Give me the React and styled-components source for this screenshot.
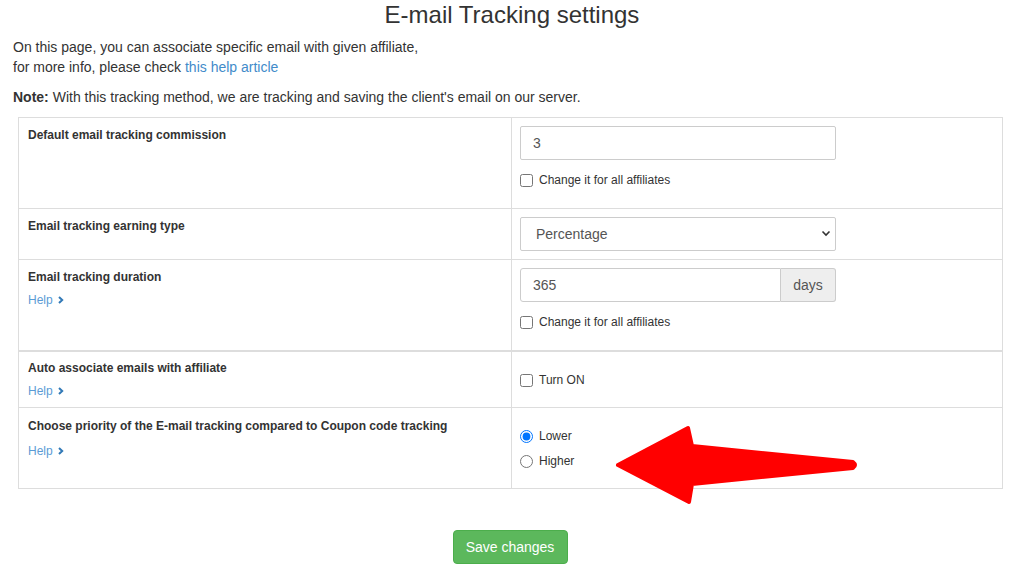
import React from "react";
import styled, { createGlobalStyle } from "styled-components";

const Global = createGlobalStyle`
  html, body { margin: 0; padding: 0; background: #fff; }
  body { font-family: "Liberation Sans", Arial, sans-serif; color: #333; font-size: 14px; line-height: 20px; }
  * { box-sizing: border-box; }
`;

const Page = styled.div`
  position: relative;
  padding: 0 21px 0 13px;
  width: 1024px;
  height: 586px;
  overflow: hidden;
`;

const Title = styled.h1`
  margin: 2px 0 9px;
  text-align: center;
  font-weight: 400;
  font-size: 24px;
  line-height: 26px;
  color: #333;
  padding-left: 8px;
`;

const Para = styled.p`
  margin: 0 0 10px;
`;

const Link = styled.a`
  color: #428bca;
  text-decoration: none;
`;

const Table = styled.table`
  margin: 0 0 0 5px;
  width: 985px;
  border-collapse: collapse;
  border: 1px solid #ddd;
  table-layout: fixed;
`;

const Row = styled.tr`
  border-top: ${(p) => (p.$thick ? "2px" : "1px")} solid #ddd;
`;

const LabelCell = styled.td`
  width: 493px;
  padding: ${(p) => p.$pad || "8px 9px"};
  vertical-align: top;
  border-right: 1px solid #ddd;
`;

const FieldCell = styled.td`
  padding: ${(p) => p.$pad || "8px"};
  vertical-align: middle;
`;

const Label = styled.div`
  font-weight: 700;
  font-size: 12px;
  line-height: 18px;
  margin-bottom: ${(p) => (p.$gap ? p.$gap : "3px")};
`;

const Help = styled.a`
  display: inline-flex;
  align-items: center;
  gap: 5px;
  font-size: 12px;
  line-height: 20px;
  color: #5b9bd5;
  text-decoration: none;
`;

const TextInput = styled.input`
  display: block;
  width: 316px;
  height: 34px;
  padding: 6px 12px;
  font-family: inherit;
  font-size: 14px;
  color: #555;
  border: 1px solid #ccc;
  border-radius: 2px;
  outline: none;
`;

const Group = styled.div`
  display: flex;
  width: 316px;
  height: 34px;
`;

const GroupInput = styled(TextInput)`
  flex: 1;
  width: auto;
  border-radius: 3px 0 0 3px;
`;

const Addon = styled.span`
  display: flex;
  align-items: center;
  justify-content: center;
  width: 55px;
  border: 1px solid #ccc;
  border-left: 0;
  border-radius: 0 3px 3px 0;
  background: #eee;
  color: #555;
  font-size: 14px;
`;

const SelectWrap = styled.div`
  position: relative;
  width: 316px;
`;

const Select = styled.select`
  display: block;
  width: 100%;
  height: 34px;
  padding: 6px 15px;
  font-family: inherit;
  font-size: 14px;
  color: #555;
  background: #fff;
  border: 1px solid #ccc;
  border-radius: 2px;
  appearance: none;
  -webkit-appearance: none;
  outline: none;
`;

const Chevron = styled.svg`
  position: absolute;
  right: 5px;
  top: 13px;
  pointer-events: none;
`;

const Check = styled.label`
  display: flex;
  align-items: center;
  gap: 6px;
  margin: ${(p) => p.$m || "10px 0"};
  font-size: 12px;
  line-height: 20px;
  color: #333;
  input {
    margin: 0;
    width: 13px;
    height: 13px;
  }
`;

const Footer = styled.div`
  display: flex;
  justify-content: center;
  margin-top: 41px;
  padding-left: 4px;
`;

const SaveButton = styled.button`
  width: 115px;
  height: 34px;
  background: #5cb85c;
  border: 1px solid #4cae4c;
  border-radius: 4px;
  color: #fff;
  font-family: inherit;
  font-size: 14px;
`;

const Arrow = styled.svg`
  position: absolute;
  left: 0;
  top: 0;
  pointer-events: none;
`;

const ChevronRight = () => (
  <svg width="6" height="8" viewBox="0 0 6 8">
    <path d="M1 1 L4.2 4 L1 7" fill="none" stroke="#337ab7" strokeWidth="2" />
  </svg>
);

export default function App() {
  return (
    <Page>
      <Global />
      <Title>E-mail Tracking settings</Title>
      <Para>
        On this page, you can associate specific email with given affiliate,
        <br />
        for more info, please check <Link href="#">this help article</Link>
      </Para>
      <Para>
        <b>Note:</b> With this tracking method, we are tracking and saving the client's email on our server.
      </Para>
      <Table>
        <tbody>
          <Row>
            <LabelCell>
              <Label>Default email tracking commission</Label>
            </LabelCell>
            <FieldCell>
              <TextInput defaultValue="3" />
              <Check>
                <input type="checkbox" /> Change it for all affiliates
              </Check>
            </FieldCell>
          </Row>
          <Row>
            <LabelCell>
              <Label>Email tracking earning type</Label>
            </LabelCell>
            <FieldCell>
              <SelectWrap>
                <Select defaultValue="p">
                  <option value="p">Percentage</option>
                  <option value="f">Fixed</option>
                </Select>
                <Chevron width="10" height="7" viewBox="0 0 10 7">
                  <path d="M1.5 1.5 L5 5 L8.5 1.5" fill="none" stroke="#333" strokeWidth="1.6" />
                </Chevron>
              </SelectWrap>
            </FieldCell>
          </Row>
          <Row>
            <LabelCell>
              <Label>Email tracking duration</Label>
              <Help href="#">
                Help <ChevronRight />
              </Help>
            </LabelCell>
            <FieldCell>
              <Group>
                <GroupInput defaultValue="365" />
                <Addon>days</Addon>
              </Group>
              <Check>
                <input type="checkbox" /> Change it for all affiliates
              </Check>
            </FieldCell>
          </Row>
          <Row $thick>
            <LabelCell $pad="7px 9px 6px">
              <Label>Auto associate emails with affiliate</Label>
              <Help href="#">
                Help <ChevronRight />
              </Help>
            </LabelCell>
            <FieldCell $pad="7px 8px 6px">
              <Check>
                <input type="checkbox" /> Turn ON
              </Check>
            </FieldCell>
          </Row>
          <Row>
            <LabelCell $pad="9px 9px 8px">
              <Label $gap="5px">Choose priority of the E-mail tracking compared to Coupon code tracking</Label>
              <Help href="#">
                Help <ChevronRight />
              </Help>
            </LabelCell>
            <FieldCell>
              <Check $m="10px 0 5px">
                <input type="radio" name="prio" defaultChecked /> Lower
              </Check>
              <Check $m="0 0 9px">
                <input type="radio" name="prio" /> Higher
              </Check>
            </FieldCell>
          </Row>
        </tbody>
      </Table>
      <Footer>
        <SaveButton>Save changes</SaveButton>
      </Footer>
      <Arrow width="1024" height="586" viewBox="0 0 1024 586">
        <path
          d="M618 465 L688 428 L692 446 L853 462 Q857 465 853 468 L692 484 L689 502 Z"
          fill="#ff0000"
          stroke="#ff0000"
          strokeWidth="4"
          strokeLinejoin="round"
        />
      </Arrow>
    </Page>
  );
}
